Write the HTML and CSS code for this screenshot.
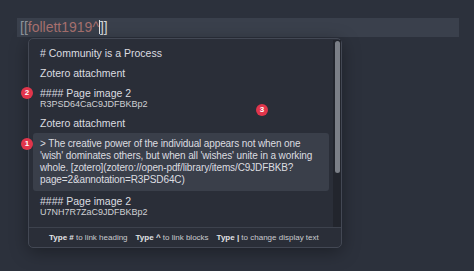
FILE: index.html
```html
<!DOCTYPE html>
<html lang="en">
<head>
  <meta charset="UTF-8">
  <title>Link suggest</title>
  <link rel="stylesheet" href="styles.css">
</head>
<body>

  <main class="editor">
    <div class="input-line">
      <span class="bracket">[[</span><span class="link-text">follett1919^</span><span class="caret"></span><span class="bracket-close">]]</span>
    </div>
  </main>

  <!-- Suggestion popup -->
  <div class="suggest">
    <div class="suggest-body">
      <ul class="suggest-list">
        <li class="item">
          <div class="title"># Community is a Process</div>
        </li>
        <li class="item">
          <div class="title">Zotero attachment</div>
        </li>
        <li class="item">
          <span class="badge badge-left">2</span>
          <div class="title">#### Page image 2</div>
          <div class="sub">R3PSD64CaC9JDFBKBp2</div>
        </li>
        <li class="item">
          <div class="title">Zotero attachment</div>
        </li>
        <li class="item selected">
          <span class="badge badge-left">1</span>
          <div class="title">&gt; The creative power of the individual appears not when one 'wish' dominates others, but when all 'wishes' unite in a working whole. [zotero](zotero://open&#8209;pdf/library/items/C9JDFBKB?<wbr>page=2&amp;annotation=R3PSD64C)</div>
        </li>
        <li class="item">
          <div class="title">#### Page image 2</div>
          <div class="sub">U7NH7R7ZaC9JDFBKBp2</div>
        </li>
      </ul>
      <div class="scrollbar">
        <div class="thumb"></div>
      </div>
    </div>
    <div class="suggest-footer">
      <span class="hint"><b>Type #</b> to link heading</span>
      <span class="hint"><b>Type ^</b> to link blocks</span>
      <span class="hint"><b>Type |</b> to change display text</span>
    </div>
  </div>

  <span class="badge badge-float">3</span>

</body>
</html>
```

FILE: styles.css
```css
body {
  margin: 0;
  background-color: #2c313c;
  font-family: "Liberation Sans", Arial, sans-serif;
  color: #dcdde0;
  height: 271px;
  overflow: hidden;
}
.editor {
  padding: 18px 15px 0 17px;
}
.input-line {
  height: 19px;
  line-height: 19px;
  background-color: #3a404c;
  padding-left: 3px;
  font-size: 14px;
}
.bracket {
  color: #8e929a;
}
.link-text {
  color: #a8716f;
}
.caret {
  display: inline-block;
  width: 1px;
  height: 14px;
  background-color: #e6e6e6;
  vertical-align: -2px;
}
.bracket-close {
  color: #d6d7da;
}

/* Suggestion popup */
.suggest {
  position: absolute;
  left: 28px;
  top: 38px;
  width: 312px;
  height: 208px;
  background-color: #2a2e38;
  border: 1px solid #434854;
  border-radius: 5px;
  box-shadow: 0 4px 18px rgba(0, 0, 0, 0.35);
  display: flex;
  flex-direction: column;
}
.suggest-body {
  display: flex;
  height: 188px;
}
.suggest-list {
  list-style: none;
  margin: 0;
  padding: 4px 0 0;
  flex: 1;
  font-size: 10.5px;
}
.item {
  position: relative;
  padding: 4px 10px 4px 11px;
  line-height: 12px;
}
.item.selected {
  background-color: #3a3f4a;
  margin: 0 4px 0 4px;
  padding: 5px 13px 5px 7px;
  border-radius: 3px;
  font-size: 10px;
  letter-spacing: -0.12px;
}
.sub {
  font-size: 9px;
  line-height: 10px;
  color: #d0d1d4;
}
.scrollbar {
  width: 8px;
  margin-top: 1px;
  background-color: #22252d;
  position: relative;
}
.thumb {
  margin: 1px auto 0;
  width: 5px;
  height: 132px;
  border-radius: 3px;
  background-color: #7b7f87;
}
.suggest-footer {
  border-top: 1px solid #3d424d;
  flex: 1;
  display: flex;
  align-items: center;
  gap: 8px;
  padding-left: 20px;
  font-size: 8px;
  color: #c9cace;
  white-space: nowrap;
}
.suggest-footer b {
  color: #e2e3e6;
}

/* Numbered markers */
.badge {
  width: 12px;
  height: 12px;
  border-radius: 50%;
  background-color: #e1354b;
  color: #fff;
  font-size: 8px;
  font-weight: bold;
  line-height: 12px;
  text-align: center;
}
.badge-left {
  position: absolute;
  left: -8px;
  top: 4px;
}
.item.selected .badge-left {
  left: -12px;
  top: 5px;
}
.badge-float {
  position: absolute;
  left: 256px;
  top: 104px;
}
```
